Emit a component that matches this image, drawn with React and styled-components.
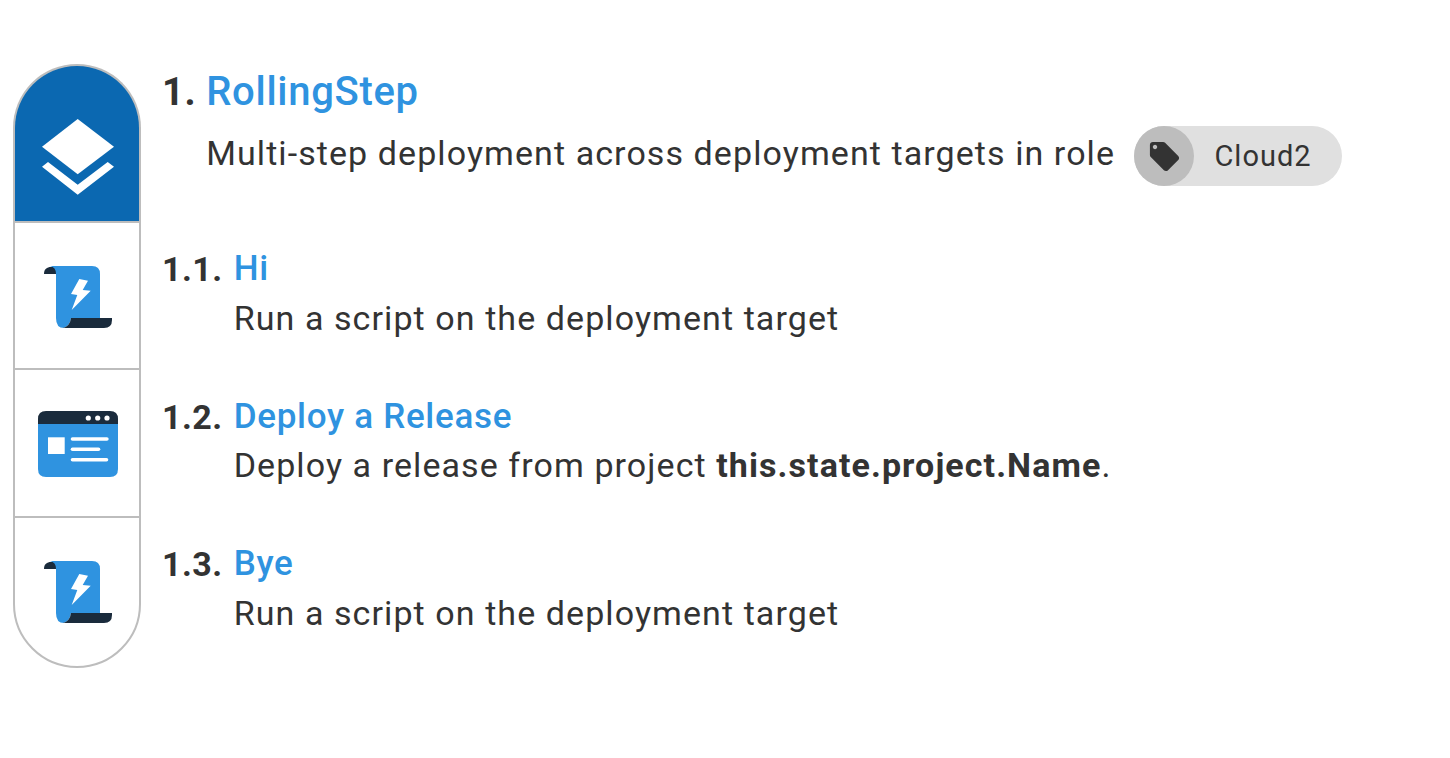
import React from "react";
import styled, { createGlobalStyle } from "styled-components";
import { MdLocalOffer } from "react-icons/md";

const GlobalStyle = createGlobalStyle`
  html, body {
    margin: 0;
    padding: 0;
    background: #fff;
    overflow: hidden;
  }
  body {
    font-family: Roboto, "Liberation Sans", sans-serif;
    color: #333;
  }
`;

const Page = styled.div`
  padding: 64px 0 0 13px;
`;

const Row = styled.div`
  display: flex;
  height: ${(props) => props.height}px;
`;

const Cell = styled.div`
  flex: none;
  width: 128px;
  box-sizing: border-box;
  display: flex;
  align-items: center;
  justify-content: center;
  border: 2px solid #bdbdbd;
  border-bottom: ${(props) => (props.last ? "2px solid #bdbdbd" : "none")};
  border-radius: ${(props) =>
    props.first ? "64px 64px 0 0" : props.last ? "0 0 64px 64px" : "0"};
  background: ${(props) => (props.active ? "#0b68b1" : "#fff")};
  padding: ${(props) => props.offset || 0}px 0 0 2px;
`;

const Body = styled.div`
  flex: 1;
  padding: ${(props) => props.top}px 0 0 21px;
  display: grid;
  grid-template-columns: auto 1fr;
  column-gap: ${(props) => (props.large ? 10 : 11)}px;
  align-content: start;
`;

const Number = styled.span`
  font-weight: 700;
  font-size: ${(props) => (props.large ? 38.5 : 34)}px;
  line-height: ${(props) => (props.large ? 54 : 44)}px;
  letter-spacing: 0.48px;
`;

const Name = styled.a`
  font-weight: 500;
  font-size: ${(props) => (props.large ? 40 : 35)}px;
  line-height: ${(props) => (props.large ? 54 : 44)}px;
  letter-spacing: 0.7px;
  color: #2f93e0;
`;

const Description = styled.div`
  grid-column: 2;
  display: flex;
  align-items: center;
  font-size: 34px;
  line-height: ${(props) => props.lineHeight || 54}px;
  letter-spacing: 1.08px;
  white-space: nowrap;

  strong {
    font-weight: 700;
    white-space: pre;
  }
`;

const Chip = styled.div`
  display: flex;
  align-items: center;
  width: 208px;
  height: 60px;
  margin: 6px 0 0 19.4px;
  border-radius: 30px;
  background: #e0e0e0;
  font-size: 29px;
  line-height: 60px;
  letter-spacing: 1px;
`;

const ChipIcon = styled.div`
  display: flex;
  align-items: center;
  justify-content: center;
  width: 60px;
  height: 60px;
  border-radius: 50%;
  background: #bdbdbd;
  color: #333;
  margin-right: 20px;
`;

const LayersIcon = () => (
  <svg width="72" height="76" viewBox="0 0 72 76">
    <polygon fill="#fff" points="35.7,0 72,27.7 35.7,55.3 0,27.7" />
    <polygon fill="#fff" points="0,47.7 6,43 35.7,65.7 65.7,43 72,47.7 35.7,75.7" />
  </svg>
);

const ScriptIcon = () => (
  <svg width="68" height="62" viewBox="0 0 68 62">
    <path fill="#1a2b3c" d="M0 8 C0 3 3 1 7 1 H12 V8 Z" />
    <path fill="#2f93e0" d="M6 0 H48 Q56 0 56 8 V52 H27 Q26 60 19 62 H20 Q12 62 12 52 V8 Q12 1 6 0 Z" />
    <path fill="#1a2b3c" d="M27 52 H68 V54 Q68 62 60 62 H19 Q26 60 27 52 Z" />
    <polygon fill="#fff" points="35.3,13 44,14.7 38.7,24 46.7,24.7 27.7,44 33.3,29 27,28" />
  </svg>
);

const WindowIcon = () => (
  <svg width="80" height="66" viewBox="0 0 80 66">
    <path fill="#2f93e0" d="M0 13 H80 V58 Q80 66 72 66 H8 Q0 66 0 58 Z" />
    <path fill="#1a2b3c" d="M8 0 H72 Q80 0 80 8 V13 H0 V8 Q0 0 8 0 Z" />
    <circle fill="#fff" cx="50.3" cy="7" r="2.6" />
    <circle fill="#fff" cx="59.7" cy="7" r="2.6" />
    <circle fill="#fff" cx="69" cy="7" r="2.6" />
    <rect fill="#fff" x="10" y="26.3" width="16.7" height="16.7" />
    <rect fill="#fff" x="32.7" y="26.2" width="38" height="3.6" rx="1.8" />
    <rect fill="#fff" x="32.7" y="36.5" width="29.6" height="3.6" rx="1.8" />
    <rect fill="#fff" x="32.7" y="46.9" width="37.6" height="3.6" rx="1.8" />
  </svg>
);

const App = () => (
  <>
    <GlobalStyle />
    <Page>
      <Row height={157}>
        <Cell first active offset={26}>
          <LayersIcon />
        </Cell>
        <Body top={1} large>
          <Number large>1.</Number>
          <Name large>RollingStep</Name>
          <Description lineHeight={68}>
            Multi-step deployment across deployment targets in role
            <Chip>
              <ChipIcon>
                <MdLocalOffer size={35} />
              </ChipIcon>
              Cloud2
            </Chip>
          </Description>
        </Body>
      </Row>
      <Row height={147}>
        <Cell offset={2}>
          <ScriptIcon />
        </Cell>
        <Body top={26}>
          <Number>1.1.</Number>
          <Name>Hi</Name>
          <Description>Run a script on the deployment target</Description>
        </Body>
      </Row>
      <Row height={148}>
        <Cell offset={2}>
          <WindowIcon />
        </Cell>
        <Body top={27}>
          <Number>1.2.</Number>
          <Name>Deploy a Release</Name>
          <Description lineHeight={52}>
            <span>
              Deploy a release from project <strong>this.state.project.Name</strong>.
            </span>
          </Description>
        </Body>
      </Row>
      <Row height={152}>
        <Cell last>
          <ScriptIcon />
        </Cell>
        <Body top={26}>
          <Number>1.3.</Number>
          <Name>Bye</Name>
          <Description>Run a script on the deployment target</Description>
        </Body>
      </Row>
    </Page>
  </>
);

export default App;
